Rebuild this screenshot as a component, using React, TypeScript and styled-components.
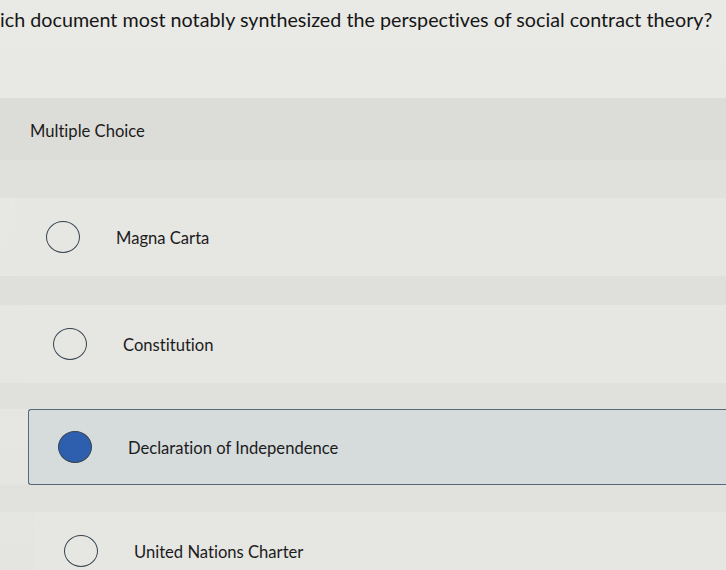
import styled, { createGlobalStyle } from "styled-components";

const GlobalStyle = createGlobalStyle`
  html, body {
    margin: 0;
    padding: 0;
    background: #e8e8e4;
    font-family: "Lato", "Open Sans", sans-serif;
    font-variant-ligatures: none;
    color: #1c1c1c;
    overflow: hidden;
  }
`;

const Page = styled.div`
  width: 726px;
  height: 570px;
  overflow: hidden;
  background: linear-gradient(180deg, #e9e9e5 0%, #e4e4e0 100%);
`;

const Question = styled.div`
  height: 98px;
  padding-top: 8px;
  box-sizing: border-box;
  white-space: nowrap;
`;

const QuestionText = styled.p`
  margin: 0;
  font-size: 19.7px;
  letter-spacing: 0.02px;
  color: #161616;
`;

const TypeBand = styled.div`
  height: 62px;
  background: #dcdcd8;
  display: flex;
  align-items: center;
  padding: 3px 0 0 30px;
  box-sizing: border-box;
  font-size: 16.6px;
`;

const Spacer = styled.div<{ $h: number; $bg: string }>`
  height: ${(p) => p.$h}px;
  background: ${(p) => p.$bg};
`;

const Option = styled.div<{ $indent: number; $selected?: boolean }>`
  margin-left: ${(p) => p.$indent}px;
  height: ${(p) => (p.$selected ? 74 : 78)}px;
  display: flex;
  align-items: center;
  background: ${(p) => (p.$selected ? "#d6dbdc" : "#e6e6e2")};
  border: ${(p) => (p.$selected ? "1px solid #56697a" : "none")};
  border-right: none;
  border-radius: 3px 0 0 3px;
`;

const Radio = styled.span<{ $checked?: boolean }>`
  width: 34px;
  height: 32px;
  border-radius: 50%;
  box-sizing: border-box;
  margin-left: ${(p) => (p.$checked ? 29 : 31)}px;
  border: 1.6px solid #35444f;
  background: ${(p) => (p.$checked ? "#2d5fae" : "transparent")};
  flex: none;
`;

const Label = styled.span`
  margin-left: 36px;
  margin-top: 1px;
  font-size: 16.6px;
`;

export default function App() {
  return (
    <Page>
      <GlobalStyle />
      <Question>
        <QuestionText>
          ich document most notably synthesized the perspectives of social contract theory?
        </QuestionText>
      </Question>
      <TypeBand>Multiple Choice</TypeBand>
      <Spacer $h={38} $bg="#e0e0dc" />
      <Option $indent={15}>
        <Radio />
        <Label>Magna Carta</Label>
      </Option>
      <Spacer $h={29} $bg="#dfdfdb" />
      <Option $indent={22}>
        <Radio />
        <Label>Constitution</Label>
      </Option>
      <Spacer $h={26} $bg="#e0e0dc" />
      <Option $indent={28} $selected>
        <Radio $checked />
        <Label>Declaration of Independence</Label>
      </Option>
      <Spacer $h={27} $bg="#e1e1dd" />
      <Option $indent={33}>
        <Radio />
        <Label>United Nations Charter</Label>
      </Option>
    </Page>
  );
}
